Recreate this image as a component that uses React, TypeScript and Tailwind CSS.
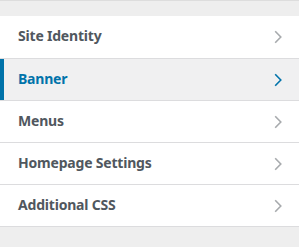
import React from "react";

const items = [
  { label: "Site Identity", active: false },
  { label: "Banner", active: true },
  { label: "Menus", active: false },
  { label: "Homepage Settings", active: false },
  { label: "Additional CSS", active: false },
];

function Chevron({ active }: { active: boolean }) {
  return (
    <svg width="8" height="14" viewBox="0 0 8 14" className="shrink-0">
      <path
        d="M1.2 1.2 L6.8 7 L1.2 12.8"
        fill="none"
        stroke={active ? "#0073aa" : "#a7aaad"}
        strokeWidth="1.6"
      />
    </svg>
  );
}

export default function App() {
  return (
    <div
      className="w-[299px] h-[247px] bg-[#eeeeee] border-t border-[#dddddd] pt-[15px]"
      style={{ fontFamily: '"Noto Sans", "Open Sans", sans-serif' }}
    >
      <ul className="border-b border-[#dcdcde]">
        {items.map((it, i) => (
          <li
            key={it.label}
            className={
              "relative flex items-center justify-between h-[42px] pl-[18px] pr-[17px] " +
              (i > 0 ? "border-t border-[#dcdcde] " : "") +
              (it.active ? "bg-[#f0f0f1]" : "bg-white")
            }
          >
            {it.active && (
              <span className="absolute left-0 top-0 bottom-0 w-[4px] bg-[#0073aa]" />
            )}
            <span
              className={
                "text-[14px] font-bold leading-none tracking-[-0.2px] -mt-[2px] " +
                (it.active ? "text-[#0073aa]" : "text-[#50575e]")
              }
            >
              {it.label}
            </span>
            <Chevron active={it.active} />
          </li>
        ))}
      </ul>
    </div>
  );
}
